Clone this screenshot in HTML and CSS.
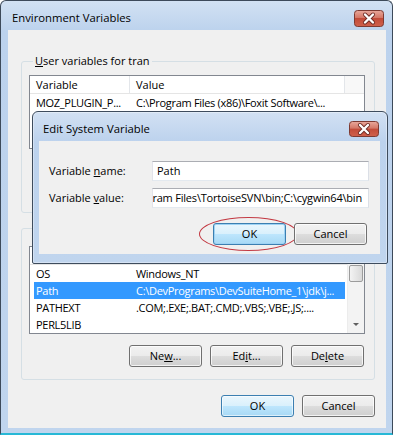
FILE: index.html
```html
<!DOCTYPE html>
<html>
<head>
<meta charset="utf-8">
<link rel="stylesheet" href="styles.css">
</head>
<body>
<div class="window">
  <div class="titlebar">
    <span class="title">Environment Variables</span>
    <span class="close">
      <svg width="30" height="17" viewBox="0 0 30 17">
        <defs>
          <linearGradient id="cg1" x1="0" y1="0" x2="0" y2="1">
            <stop offset="0" stop-color="#e9a99c"/>
            <stop offset="0.45" stop-color="#d47767"/>
            <stop offset="0.5" stop-color="#c24b39"/>
            <stop offset="1" stop-color="#d0614c"/>
          </linearGradient>
        </defs>
        <rect x="0.5" y="0.5" width="29" height="16" rx="3" fill="url(#cg1)" stroke="#7d3a32"/>
        <path d="M11 4.5 L19 12.5 M19 4.5 L11 12.5" stroke="#6b2a24" stroke-width="4" stroke-linecap="round"/>
        <path d="M11 4.5 L19 12.5 M19 4.5 L11 12.5" stroke="#ffffff" stroke-width="2.4" stroke-linecap="round"/>
      </svg>
    </span>
  </div>
  <div class="client">
    <div class="group group-user">
      <span class="legend"><u>U</u>ser variables for tran</span>
      <div class="list list-user">
        <div class="header">
          <span class="hcell">Variable</span>
          <span class="hcell">Value</span>
          <span class="hcell"></span>
        </div>
        <div class="row">
          <span class="cell">MOZ_PLUGIN_P...</span>
          <span class="cell">C:\Program Files (x86)\Foxit Software\...</span>
        </div>
      </div>
    </div>
    <div class="group group-system">
      <span class="legend"><u>S</u>ystem variables</span>
      <div class="list list-system">
        <div class="listbody">
          <div class="rows">
            <div class="header">
              <span class="hcell"></span>
              <span class="hcell"></span>
            </div>
            <div class="row">
              <span class="cell">OS</span>
              <span class="cell">Windows_NT</span>
            </div>
            <div class="row selected">
              <span class="cell">Path</span>
              <span class="cell">C:\DevPrograms\DevSuiteHome_1\jdk\j...</span>
            </div>
            <div class="row">
              <span class="cell">PATHEXT</span>
              <span class="cell">.COM;.EXE;.BAT;.CMD;.VBS;.VBE;.JS;....</span>
            </div>
            <div class="row">
              <span class="cell">PERL5LIB</span>
              <span class="cell"></span>
            </div>
          </div>
          <div class="scrollbar">
            <span class="sb-btn sb-up"><span class="arrow-up"></span></span>
            <span class="sb-thumb"></span>
            <span class="sb-track"></span>
            <span class="sb-btn sb-down"><span class="arrow-down"></span></span>
          </div>
        </div>
      </div>
      <div class="btnrow">
        <span class="btn">Ne<u>w</u>...</span>
        <span class="btn">Ed<u>i</u>t...</span>
        <span class="btn">De<u>l</u>ete</span>
      </div>
    </div>
    <div class="btnrow main-buttons">
      <span class="btn default">OK</span>
      <span class="btn">Cancel</span>
    </div>
  </div>

  <div class="dialog">
    <div class="titlebar">
      <span class="title">Edit System Variable</span>
      <span class="close">
        <svg width="30" height="16" viewBox="0 0 30 16">
          <defs>
            <linearGradient id="cg2" x1="0" y1="0" x2="0" y2="1">
              <stop offset="0" stop-color="#e9a99c"/>
              <stop offset="0.45" stop-color="#d47767"/>
              <stop offset="0.5" stop-color="#c24b39"/>
              <stop offset="1" stop-color="#d0614c"/>
            </linearGradient>
          </defs>
          <rect x="0.5" y="0.5" width="29" height="15" rx="3" fill="url(#cg2)" stroke="#7d3a32"/>
          <path d="M11 4 L19 12 M19 4 L11 12" stroke="#6b2a24" stroke-width="4" stroke-linecap="round"/>
          <path d="M11 4 L19 12 M19 4 L11 12" stroke="#ffffff" stroke-width="2.4" stroke-linecap="round"/>
        </svg>
      </span>
    </div>
    <div class="dlg-client">
      <div class="field">
        <span class="flabel">Variable <u>n</u>ame:</span>
        <span class="input">Path</span>
      </div>
      <div class="field">
        <span class="flabel">Variable <u>v</u>alue:</span>
        <span class="input input-scrolled"><span class="scrolltext">ram Files\TortoiseSVN\bin;C:\cygwin64\bin</span></span>
      </div>
      <div class="btnrow dlg-buttons">
        <span class="btn default focused">OK<span class="ellipse"></span></span>
        <span class="btn">Cancel</span>
      </div>
    </div>
  </div>
</div>
</body>
</html>
```
FILE: styles.css
```css
* { box-sizing: border-box; }

body {
  margin: 0;
  background: #ffffff;
  font-family: "Open Sans", "Noto Sans", sans-serif;
  font-size: 11px;
  color: #000;
}

u { text-decoration: underline; text-underline-offset: 1px; }

.window {
  position: relative;
  width: 393px;
  height: 435px;
  border: 1px solid #3d4a5a;
  border-bottom: 2px solid #27b8d6;
  border-radius: 6px 6px 0 0;
  background: linear-gradient(#d2e1f3, #bcd2ed 30px, #c0d5ee);
  padding: 0 6px 0 7px;
  display: flex;
  flex-direction: column;
}

.titlebar {
  height: 29px;
  flex: none;
  display: flex;
  justify-content: space-between;
  align-items: flex-start;
  padding: 9px 2px 0 4px;
}

.title {
  line-height: 16px;
  font-size: 11.3px;
  color: #000;
}

.close { display: block; height: 17px; }
.close svg { display: block; }

.client {
  height: 398px;
  flex: none;
  background: #f0f0f0;
  padding: 31px 11px 11px 13px;
  display: flex;
  flex-direction: column;
}

.group {
  height: 152px;
  flex: none;
  border: 1px solid #d5dfe5;
  border-radius: 3px;
  padding: 0 9px 0 7px;
  display: flex;
  flex-direction: column;
}

.group-system { margin-top: 15px; }

.legend {
  display: block;
  width: fit-content;
  margin: -9px 0 0 4px;
  padding: 0 2px;
  line-height: 16px;
  background: #f0f0f0;
}

.list {
  background: #fff;
  border: 1px solid #828790;
  flex: none;
  overflow: hidden;
}

.list-user { margin-top: 6px; height: 74px; }
.list-system { margin-top: 10px; height: 88px; }

.header {
  height: 18px;
  display: grid;
  grid-template-columns: 100px 215px 1fr;
  border-bottom: 1px solid #e5e5e5;
  background: #fff;
}

.hcell {
  line-height: 17px;
  padding-left: 6px;
  color: #000;
  border-right: 1px solid #e3e6ea;
}

.list-user .hcell:last-child { background: #f8f8f8; border-right: none; }

.row {
  height: 17px;
  display: grid;
  grid-template-columns: 96px 215px;
  margin-left: 4px;
  line-height: 17px;
  white-space: nowrap;
  letter-spacing: -0.3px;
}

.cell {
  padding-left: 2px;
  overflow: hidden;
}

.cell + .cell { padding-left: 6px; }

.row.selected {
  background: #3399ff;
  color: #fff;
  width: 311px;
}

.listbody {
  display: flex;
  height: 100%;
}

.rows { flex: 1; }

.list-system .header { grid-template-columns: 100px 1fr; }
.list-system .hcell:last-child { border-right: none; }

.scrollbar {
  width: 17px;
  flex: none;
  display: flex;
  flex-direction: column;
  background: #f3f3f3;
  border-left: 1px solid #ececec;
}

.sb-btn {
  height: 18px;
  flex: none;
  display: flex;
  align-items: center;
  justify-content: center;
}

.sb-thumb {
  height: 17px;
  flex: none;
  margin: 0 1px;
  border: 1px solid #9c9c9c;
  border-radius: 2px;
  background: linear-gradient(90deg, #f3f3f3, #e6e6e6 50%, #d9d9d9);
}

.sb-track { flex: 1; }

.arrow-down {
  width: 0;
  height: 0;
  border-left: 3px solid transparent;
  border-right: 3px solid transparent;
  border-top: 3px solid #606060;
}

.arrow-up {
  width: 0;
  height: 0;
  border-left: 3px solid transparent;
  border-right: 3px solid transparent;
  border-bottom: 3px solid #606060;
}

.btnrow {
  display: flex;
  justify-content: flex-end;
  gap: 8px;
  flex: none;
}

.group .btnrow { margin-top: 11px; padding-right: 1px; }

.main-buttons { margin-top: 15px; padding-right: 0; }

.btn {
  position: relative;
  width: 73px;
  height: 22px;
  border: 1px solid #707070;
  border-radius: 3px;
  background: linear-gradient(#f2f2f2, #ebebeb 50%, #dddddd 50%, #cfcfcf);
  box-shadow: inset 0 0 0 1px rgba(255,255,255,0.75);
  display: flex;
  align-items: center;
  justify-content: center;
  line-height: 16px;
}

.btn.default {
  border-color: #3c7fb1;
  background: linear-gradient(#eaf6fd, #d9f0fc 50%, #bee6fd 50%, #a7d9f5);
  box-shadow: inset 0 0 0 1px rgba(255,255,255,0.6);
}

.dialog {
  position: absolute;
  left: 31px;
  top: 110px;
  width: 356px;
  height: 153px;
  border: 1px solid #3e4c5d;
  border-radius: 6px 6px 2px 2px;
  background: linear-gradient(#d2e1f3, #bcd2ed 30px, #c0d5ee);
  padding: 0 7px 0 6px;
  display: flex;
  flex-direction: column;
  box-shadow: 0 0 0 1px rgba(255,255,255,0.35) inset;
}

.dialog .titlebar { padding-right: 1px; }
.dialog .close { height: 16px; }

.dlg-client {
  height: 113px;
  flex: none;
  background: #f0f0f0;
  padding: 20px 13px 0 10px;
  display: flex;
  flex-direction: column;
  gap: 7px;
}

.field {
  display: grid;
  grid-template-columns: 103px 217px;
  align-items: center;
}

.flabel { line-height: 16px; }

.input {
  height: 20px;
  border: 1px solid #abadb3;
  border-left-color: #e2e3ea;
  border-right-color: #dbdfe6;
  border-bottom-color: #e3e9ef;
  background: #fff;
  padding: 0 6px 0 4px;
  line-height: 18px;
  white-space: nowrap;
  overflow: hidden;
  display: flex;
}

.input-scrolled { justify-content: flex-end; padding-left: 2px; letter-spacing: -0.2px; }
.scrolltext { flex: none; }

.dlg-buttons { margin-top: 8px; gap: 8px; }

.btn.focused {
  border-color: #3c7fb1;
  box-shadow: inset 0 0 0 1px #9fd3f4;
}

.ellipse {
  position: absolute;
  left: -15px;
  top: -7px;
  width: 99px;
  height: 34px;
  border: 1px solid #c33a43;
  border-radius: 50%;
  pointer-events: none;
}
```
